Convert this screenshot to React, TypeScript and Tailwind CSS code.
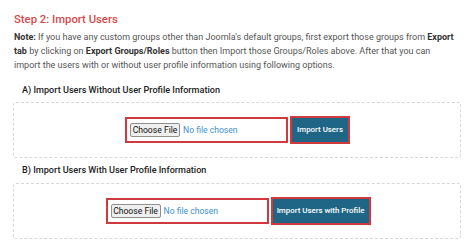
import React from "react";

function FileRow({ label, boxW, btnW }: { label: string; boxW: string; btnW: string }) {
  return (
    <div className="flex items-center justify-center gap-[2px]">
      <div className={`flex h-[26px] ${boxW} items-center border-2 border-[#d03a3f] pl-[3px]`}>
        <span className="flex h-[14px] w-[50px] items-center justify-center rounded-[2px] border border-[#8f8f8f] bg-[#efefef] text-[8.6px] leading-none text-[#111]">
          Choose File
        </span>
        <span className="ml-[3px] text-[8.6px] text-[#3d8fd1]">No file chosen</span>
      </div>
      <div
        className={`flex h-[28px] ${btnW} items-center justify-center whitespace-nowrap border-2 border-[#d03a3f] bg-[#1e6586] text-[7.9px] font-medium text-white`}
      >
        {label}
      </div>
    </div>
  );
}

export default function App() {
  return (
    <div
      className="h-[251px] w-[474px] bg-white px-[14px] pt-[12px] text-[#555]"
      style={{ fontFamily: "Roboto, 'Liberation Sans', sans-serif" }}
    >
      <h2 className="text-[11.3px] font-medium leading-[16px] text-[#d4494b]">Step 2: Import Users</h2>
      <p className="mt-[2px] text-[9px] leading-[14px]">
        <b className="text-[#333]">Note:</b> If you have any custom groups other than Joomla's default groups, first export
        those groups from <b className="text-[#333]">Export tab</b> by clicking on{" "}
        <b className="text-[#333]">Export Groups/Roles</b> button then Import those Groups/Roles above. After that you can
        <br />
        import the users with or without user profile information using following options.
      </p>
      <div className="mt-[11px] pl-[8px] text-[9.1px] font-medium leading-[14px] text-[#222]">
        A) Import Users Without User Profile Information
      </div>
      <div className="-mx-[1px] mt-[5px] flex h-[56px] items-center rounded-[3px] border border-dashed border-[#d8d8d8]">
        <div className="w-full pl-[1px]">
          <FileRow label="Import Users" boxW="w-[163px]" btnW="w-[60px]" />
        </div>
      </div>
      <div className="mt-[5px] pl-[8px] text-[9.1px] font-medium leading-[14px] text-[#222]">
        B) Import Users With User Profile Information
      </div>
      <div className="-mx-[1px] mt-[6px] flex h-[56px] items-center rounded-[3px] border border-dashed border-[#d8d8d8]">
        <div className="w-full pl-[2px]">
          <FileRow label="Import Users with Profile" boxW="w-[163px]" btnW="w-[100px]" />
        </div>
      </div>
    </div>
  );
}
